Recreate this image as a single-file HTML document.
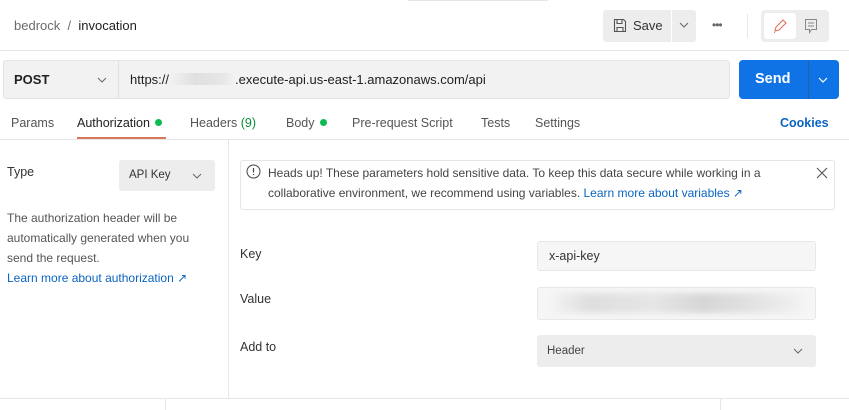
<!DOCTYPE html>
<html><head><style>
*{box-sizing:border-box;margin:0;padding:0}
body{width:849px;height:410px;overflow:hidden;background:#fff;font-family:"Liberation Sans",sans-serif;font-size:12.5px;color:#212121;position:relative}
.a{position:absolute}
.g{color:#6b6b6b}
.blue{color:#0b64c0}
.dot{display:inline-block;width:7px;height:7px;border-radius:50%;background:#0cbb52;margin-left:5px;vertical-align:1px}
</style></head><body>
<div class="a" style="left:408px;top:0;width:140px;height:3px;border-top:1px solid #e6e6e6"></div>
<div class="a" style="left:14px;top:18px;font-size:13px"><span class="g">bedrock</span> <span class="g">&nbsp;/&nbsp;</span> <span style="color:#212121">invocation</span></div>
<div class="a" style="left:603px;top:10px;width:68px;height:32px;background:#ededed;border-radius:3px 0 0 3px"></div>
<svg class="a" style="left:613px;top:18px" width="14" height="15" viewBox="0 0 14 15"><path d="M1.5 1.5h9l2 2v10h-11z M4 1.5v4h5v-4 M4 13.5v-4h6v4" fill="none" stroke="#555" stroke-width="1.1"/></svg>
<div class="a" style="left:633px;top:18px;font-size:13px;color:#333">Save</div>
<div class="a" style="left:672px;top:10px;width:24px;height:32px;background:#ededed;border-radius:0 3px 3px 0"></div>
<svg class="a" style="left:679px;top:22px" width="10" height="6" viewBox="0 0 10 6"><path d="M1 1l4 4 4-4" fill="none" stroke="#666" stroke-width="1"/></svg>
<div class="a" style="left:712px;top:18px;color:#666;font-size:12px;letter-spacing:-1px">•••</div>
<div class="a" style="left:747px;top:14px;width:1px;height:24px;background:#e6e6e6"></div>
<div class="a" style="left:761px;top:10px;width:68px;height:32px;background:#ededed;border-radius:4px"></div>
<div class="a" style="left:764px;top:13px;width:32px;height:26px;background:#fff;border-radius:3px"></div>
<svg class="a" style="left:772px;top:18px" width="15" height="16" viewBox="0 0 15 16"><path d="M3 13l1-4 7-7 3 3-7 7z M2 14.5h1" fill="none" stroke="#e0705a" stroke-width="1.1"/></svg>
<svg class="a" style="left:804px;top:18px" width="14" height="16" viewBox="0 0 14 16"><path d="M1.5 1.5h11v10h-5l-2 3v-3h-4z M4 5h6 M4 8h6" fill="none" stroke="#888" stroke-width="1"/></svg>
<div class="a" style="left:0;top:50px;width:849px;height:1px;background:#e6e6e6"></div>
<div class="a" style="left:3px;top:60px;width:727px;height:39px;background:#f2f2f2;border:1px solid #e4e4e4;border-radius:3px"></div>
<div class="a" style="left:118px;top:60px;width:1px;height:39px;background:#e0e0e0"></div>
<div class="a" style="left:14px;top:72px;font-size:13px;font-weight:bold;color:#212121">POST</div>
<svg class="a" style="left:97px;top:77px" width="10" height="6" viewBox="0 0 10 6"><path d="M1 1l4 4 4-4" fill="none" stroke="#666" stroke-width="1"/></svg>
<div class="a" style="left:130px;top:72px;font-size:13px">https://<span style="display:inline-block;width:66px;height:12px;background:linear-gradient(90deg,#f2f2f2,#e0e0e0 40%,#e6e6e6 80%,#f2f2f2);vertical-align:-1px"></span>.execute-api.us-east-1.amazonaws.com/api</div>
<div class="a" style="left:739px;top:60px;width:100px;height:39px;background:#0f73e6;border-radius:4px"></div>
<div class="a" style="left:808px;top:60px;width:1px;height:39px;background:#2b5f9e"></div>
<div class="a" style="left:755px;top:71px;font-size:14.5px;font-weight:bold;color:#fff">Send</div>
<svg class="a" style="left:818px;top:77px" width="10" height="6" viewBox="0 0 10 6"><path d="M1 1l4 4 4-4" fill="none" stroke="#fff" stroke-width="1.2"/></svg>
<div class="a" style="left:11px;top:116px;color:#555">Params</div>
<div class="a" style="left:77px;top:116px;color:#212121">Authorization<span class="dot"></span></div>
<div class="a" style="left:190px;top:116px;color:#555">Headers <span style="color:#0a8a3a">(9)</span></div>
<div class="a" style="left:286px;top:116px;color:#555">Body<span class="dot"></span></div>
<div class="a" style="left:352px;top:116px;color:#555">Pre-request Script</div>
<div class="a" style="left:481px;top:116px;color:#555">Tests</div>
<div class="a" style="left:535px;top:116px;color:#555">Settings</div>
<div class="a blue" style="left:780px;top:116px;font-weight:bold">Cookies</div>
<div class="a" style="left:77px;top:137px;width:89px;height:2px;background:#d9775b"></div>
<div class="a" style="left:0;top:139px;width:849px;height:1px;background:#e6e6e6"></div>
<div class="a" style="left:228px;top:140px;width:1px;height:258px;background:#e6e6e6"></div>
<div class="a" style="left:0;top:398px;width:849px;height:1px;background:#e6e6e6"></div>
<div class="a" style="left:7px;top:165px;color:#333">Type</div>
<div class="a" style="left:119px;top:160px;width:96px;height:31px;background:#ededed;border-radius:3px"></div>
<div class="a" style="left:129px;top:169px;font-size:11.5px;color:#333">API Key</div>
<svg class="a" style="left:192px;top:173px" width="10" height="6" viewBox="0 0 10 6"><path d="M1 1l4 4 4-4" fill="none" stroke="#666" stroke-width="1"/></svg>
<div class="a" style="left:7px;top:208px;width:205px;line-height:20px;color:#555;font-size:12px">The authorization header will be automatically generated when you send the request.<br><span class="blue">Learn more about authorization ↗</span></div>
<div class="a" style="left:240px;top:160px;width:595px;height:50px;border:1px solid #e6e6e6;border-radius:3px"></div>
<svg class="a" style="left:246px;top:164px" width="15" height="15" viewBox="0 0 15 15"><circle cx="7.5" cy="7.5" r="6.5" fill="none" stroke="#444" stroke-width="1"/><path d="M7.5 4v4.5M7.5 10v1" stroke="#444" stroke-width="1.2"/></svg>
<div class="a" style="left:268px;top:163px;width:540px;line-height:20px;color:#444;font-size:12px">Heads up! These parameters hold sensitive data. To keep this data secure while working in a collaborative environment, we recommend using variables. <span class="blue">Learn more about variables ↗</span></div>
<svg class="a" style="left:816px;top:167px" width="12" height="12" viewBox="0 0 12 12"><path d="M1 1l10 10M11 1L1 11" stroke="#555" stroke-width="1.1"/></svg>
<div class="a" style="left:240px;top:247px;color:#333">Key</div>
<div class="a" style="left:537px;top:241px;width:279px;height:30px;background:#f6f6f6;border:1px solid #e8e8e8;border-radius:3px"></div>
<div class="a" style="left:549px;top:249px;color:#333">x-api-key</div>
<div class="a" style="left:240px;top:292px;color:#333">Value</div>
<div class="a" style="left:537px;top:287px;width:279px;height:33px;background:#f6f6f6;border:1px solid #e8e8e8;border-radius:3px"></div>
<div class="a" style="left:553px;top:293px;width:250px;height:20px;background:linear-gradient(90deg,#f2f2f2,#dedede 15%,#e6e6e6 40%,#d6d6d6 60%,#e2e2e2 80%,#f2f2f2);filter:blur(3px)"></div>
<div class="a" style="left:240px;top:340px;color:#333">Add to</div>
<div class="a" style="left:537px;top:335px;width:279px;height:32px;background:#ededed;border-radius:3px"></div>
<div class="a" style="left:547px;top:345px;font-size:11.5px;color:#444">Header</div>
<svg class="a" style="left:793px;top:348px" width="10" height="6" viewBox="0 0 10 6"><path d="M1 1l4 4 4-4" fill="none" stroke="#666" stroke-width="1"/></svg>
<div class="a" style="left:165px;top:399px;width:1px;height:11px;background:#e6e6e6"></div>
<div class="a" style="left:720px;top:399px;width:1px;height:11px;background:#e6e6e6"></div>
</body></html>
